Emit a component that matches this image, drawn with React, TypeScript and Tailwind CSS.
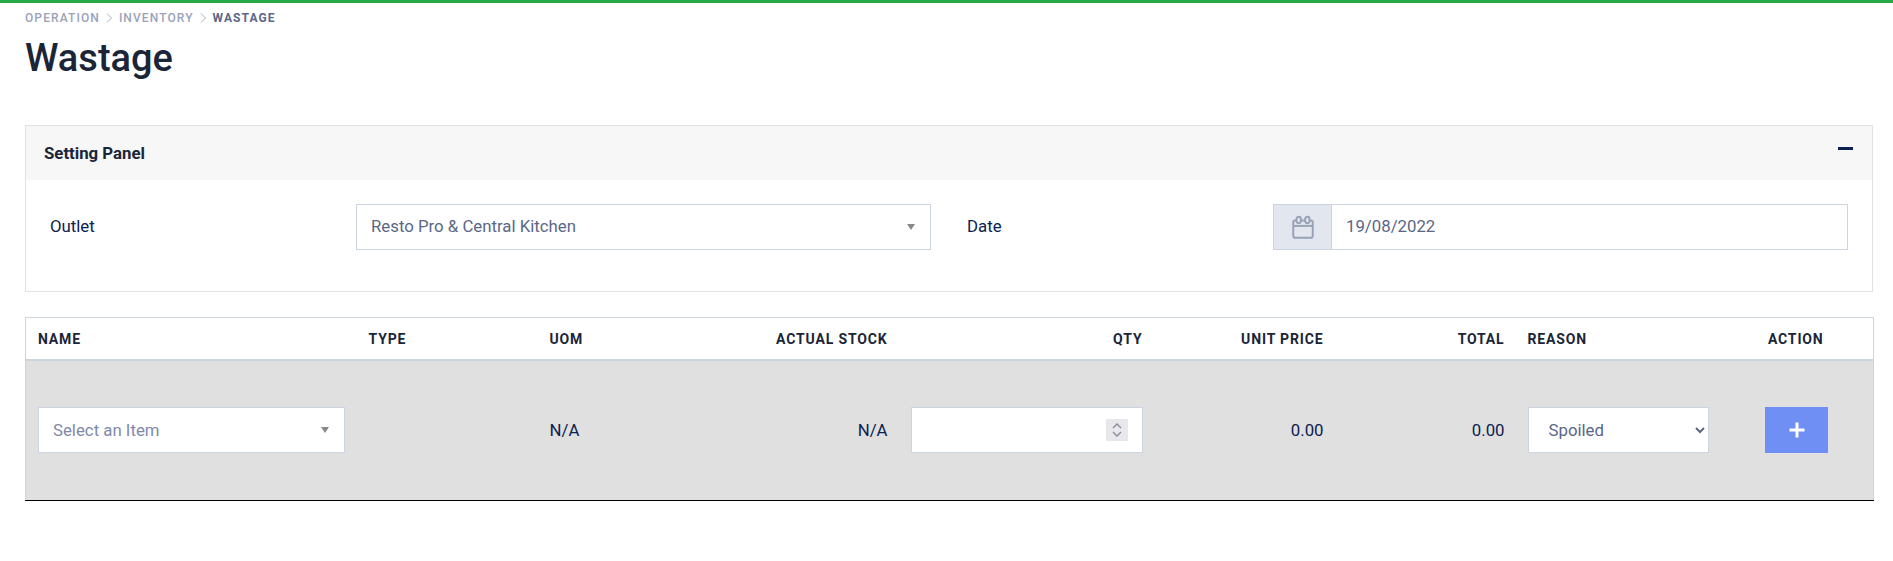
import React from "react";

const thBase = "h-[42px] px-3 pt-[2px] text-[14px] font-bold tracking-[0.85px] uppercase text-[#1a2538]";
const tdBase = "px-3 text-[16.8px] text-[#0b2150]";

function Caret() {
  return <span className="w-0 h-0 border-x-[4px] border-x-transparent border-t-[6px] border-t-[#888888]" />;
}

function Calendar() {
  return (
    <svg width="24" height="26" viewBox="0 0 22 24" fill="none" stroke="#98a2b5" strokeWidth="1.8">
      <path d="M5 6H3.5A1.5 1.5 0 0 0 2 7.5V20a2 2 0 0 0 2 2h14a2 2 0 0 0 2-2V7.5A1.5 1.5 0 0 0 18.500 6H17" />
      <path d="M2 11h18" />
      <path d="M9 6h4" />
      <rect x="5" y="2.500" width="4" height="6" rx="2" />
      <rect x="13" y="2.500" width="4" height="6" rx="2" />
    </svg>
  );
}

function Chevron() {
  return (
    <svg width="7" height="12" viewBox="0 0 7 12" fill="none" stroke="#a9b0c2" strokeWidth="1">
      <path d="M1 1.500l4.500 4.500-4.500 4.500" />
    </svg>
  );
}

export default function App() {
  return (
    <div className="min-h-[561px] bg-white font-['Roboto',sans-serif] border-t-[3px] border-[#28a745] pl-[25px] pr-[20px]">
      <nav className="flex items-center h-[24px] pt-[6px] gap-[6px] text-[12px] font-medium tracking-[1.1px] uppercase text-[#9aa3ba]">
        <span>Operation</span>
        <Chevron />
        <span>Inventory</span>
        <Chevron />
        <span className="font-bold text-[#5a6788]">Wastage</span>
      </nav>
      <h1 className="text-[38px] leading-[46px] font-medium text-[#1a2538] mt-[8px]">Wastage</h1>

      <section className="mt-[44px] border border-[#e2e2e2]">
        <div className="flex justify-between h-[54px] bg-[#f7f7f7] pl-[18px] pr-[19px]">
          <h2 className="text-[16.8px] leading-[54px] font-bold text-[#1a2538]">Setting Panel</h2>
          <span className="block mt-[21px] w-[15px] h-[3px] bg-[#0b2150]" />
        </div>
        <div className="flex items-center h-[111px] pb-[18px] pl-[24px] pr-[24px]">
          <label className="w-[306px] text-[16.8px] text-[#0b2150]">Outlet</label>
          <div className="flex items-center justify-between w-[575px] h-[46px] border border-[#ccd3e1] pl-[14px] pr-[15px] text-[16.8px] text-[#5a6788]">
            <span>Resto Pro &amp; Central Kitchen</span>
            <Caret />
          </div>
          <label className="ml-[36px] w-[306px] text-[16.8px] text-[#0b2150]">Date</label>
          <div className="flex w-[575px] h-[46px] border border-[#ccd3e1]">
            <div className="flex items-center justify-center w-[58px] bg-[#e2e6ee] border-r border-[#ccd3e1]">
              <Calendar />
            </div>
            <div className="flex items-center pl-[14px] text-[16.8px] text-[#5a6788]">19/08/2022</div>
          </div>
        </div>
      </section>

      <table className="mt-[25px] w-full table-fixed border-collapse">
        <colgroup>
          <col className="w-[331px]" />
          <col className="w-[181px]" />
          <col className="w-[181px]" />
          <col className="w-[181px]" />
          <col className="w-[255px]" />
          <col className="w-[181px]" />
          <col className="w-[180px]" />
          <col className="w-[205px]" />
          <col className="w-[153px]" />
        </colgroup>
        <thead>
          <tr className="border border-[#ccd3e1] border-b-2">
            <th className={`${thBase} text-left`}>Name</th>
            <th className={`${thBase} text-left`}>Type</th>
            <th className={`${thBase} text-left`}>UOM</th>
            <th className={`${thBase} text-right`}>Actual Stock</th>
            <th className={`${thBase} text-right`}>Qty</th>
            <th className={`${thBase} text-right`}>Unit Price</th>
            <th className={`${thBase} text-right !pr-[11px]`}>Total</th>
            <th className={`${thBase} text-left`}>Reason</th>
            <th className={`${thBase} text-center !pr-[14px]`}>Action</th>
          </tr>
        </thead>
        <tbody>
          <tr className="h-[141px] bg-[#e0e0e0] border-x border-x-[#ccd3e1] border-b border-b-black">
            <td className={tdBase}>
              <div className="flex items-center justify-between h-[46px] bg-white border border-[#ccd3e1] pl-[14px] pr-[15px] text-[#7f8aa8]">
                <span>Select an Item</span>
                <Caret />
              </div>
            </td>
            <td className={tdBase} />
            <td className={tdBase}>N/A</td>
            <td className={`${tdBase} text-right`}>N/A</td>
            <td className={`${tdBase} !pl-[11px]`}>
              <div className="flex items-center justify-end h-[46px] bg-white border border-[#ccd3e1] pr-[14px]">
                <div className="flex flex-col items-center justify-center gap-[2px] w-[22px] h-[22px] bg-[#e8e8ec]">
                  <svg width="10" height="6" viewBox="0 0 10 6" fill="none" stroke="#8a8a96" strokeWidth="1.300"><path d="M1 5l4-4 4 4" /></svg>
                  <svg width="10" height="6" viewBox="0 0 10 6" fill="none" stroke="#8a8a96" strokeWidth="1.300"><path d="M1 1l4 4 4-4" /></svg>
                </div>
              </div>
            </td>
            <td className={`${tdBase} text-right`}>0.00</td>
            <td className={`${tdBase} text-right !pr-[11px]`}>0.00</td>
            <td className={tdBase}>
              <select className="w-full h-[46px] bg-white border border-[#ccd3e1] pl-[16px] text-[16.8px] text-[#5a6788]">
                <option>Spoiled</option>
              </select>
            </td>
            <td className={`${tdBase} text-center`}>
              <button className="inline-flex items-center justify-center align-middle w-[63px] h-[46px] bg-[#6f8ff5] text-white">
                <svg width="16" height="16" viewBox="0 0 16 16" fill="none" stroke="#ffffff" strokeWidth="3"><path d="M8 .5v15M.5 8h15" /></svg>
              </button>
            </td>
          </tr>
        </tbody>
      </table>
    </div>
  );
}
